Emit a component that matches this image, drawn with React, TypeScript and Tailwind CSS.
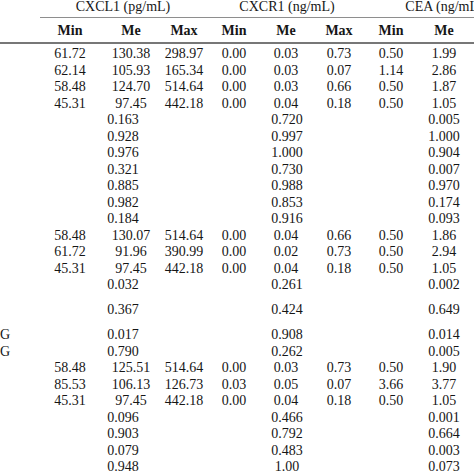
const cols = 'grid grid-cols-[40px_60px_62px_44px_56px_48px_58px_46px_60px_46px]';

type Row =
  | { kind: 'd'; v: string[] }
  | { kind: 'p'; v: string[]; label?: string; tall?: boolean };

const rows: Row[] = [
  { kind: 'd', v: ['61.72', '130.38', '298.97', '0.00', '0.03', '0.73', '0.50', '1.99'] },
  { kind: 'd', v: ['62.14', '105.93', '165.34', '0.00', '0.03', '0.07', '1.14', '2.86'] },
  { kind: 'd', v: ['58.48', '124.70', '514.64', '0.00', '0.03', '0.66', '0.50', '1.87'] },
  { kind: 'd', v: ['45.31', '97.45', '442.18', '0.00', '0.04', '0.18', '0.50', '1.05'] },
  { kind: 'p', v: ['0.163', '0.720', '0.005'] },
  { kind: 'p', v: ['0.928', '0.997', '1.000'] },
  { kind: 'p', v: ['0.976', '1.000', '0.904'] },
  { kind: 'p', v: ['0.321', '0.730', '0.007'] },
  { kind: 'p', v: ['0.885', '0.988', '0.970'] },
  { kind: 'p', v: ['0.982', '0.853', '0.174'] },
  { kind: 'p', v: ['0.184', '0.916', '0.093'] },
  { kind: 'd', v: ['58.48', '130.07', '514.64', '0.00', '0.04', '0.66', '0.50', '1.86'] },
  { kind: 'd', v: ['61.72', '91.96', '390.99', '0.00', '0.02', '0.73', '0.50', '2.94'] },
  { kind: 'd', v: ['45.31', '97.45', '442.18', '0.00', '0.04', '0.18', '0.50', '1.05'] },
  { kind: 'p', v: ['0.032', '0.261', '0.002'], tall: true },
  { kind: 'p', v: ['0.367', '0.424', '0.649'], tall: true },
  { kind: 'p', v: ['0.017', '0.908', '0.014'], label: 'G' },
  { kind: 'p', v: ['0.790', '0.262', '0.005'], label: 'G' },
  { kind: 'd', v: ['58.48', '125.51', '514.64', '0.00', '0.03', '0.73', '0.50', '1.90'] },
  { kind: 'd', v: ['85.53', '106.13', '126.73', '0.03', '0.05', '0.07', '3.66', '3.77'] },
  { kind: 'd', v: ['45.31', '97.45', '442.18', '0.00', '0.04', '0.18', '0.50', '1.05'] },
  { kind: 'p', v: ['0.096', '0.466', '0.001'] },
  { kind: 'p', v: ['0.903', '0.792', '0.664'] },
  { kind: 'p', v: ['0.079', '0.483', '0.003'] },
  { kind: 'p', v: ['0.948', '1.00', '0.073'] },
];

function Cell({ children, span }: { children?: React.ReactNode; span?: boolean }) {
  return (
    <div className={`flex justify-center whitespace-nowrap ${span ? 'col-span-3' : ''}`}>
      {children}
    </div>
  );
}

export default function App() {
  const groups = ['CXCL1 (pg/mL)', 'CXCR1 (ng/mL)', 'CEA (ng/mL)'];
  // the last column sits past the right edge of the crop
  const subs = ['Min', 'Me', 'Max', 'Min', 'Me', 'Max', 'Min', 'Me', ''];

  return (
    <div className="w-[474px] h-[474px] overflow-hidden bg-white text-[#161616] font-['Liberation_Serif',serif] text-[14px]">
      <div className="w-[520px]">
        {/* group titles */}
        <div className={`${cols} h-[18px]`}>
          <div />
          {groups.map((g) => (
            <div
              key={g}
              className="col-span-3 flex justify-center whitespace-nowrap border-b border-[#8e8e8e] leading-[14px]"
            >
              {g}
            </div>
          ))}
        </div>

        {/* sub headers */}
        <div className={`${cols} h-[26px] items-center border-b-2 border-[#777777] font-bold`}>
          <div />
          {subs.map((s, i) => (
            <Cell key={i}>{s}</Cell>
          ))}
        </div>

        {/* body */}
        <div className="pt-[2px] leading-[16.5px]">
          {rows.map((r, i) => (
            <div
              key={i}
              className={`${cols} items-start ${r.kind === 'p' && r.tall ? 'h-[25px]' : 'h-[16.5px]'}`}
            >
              <div className="whitespace-nowrap">{r.kind === 'p' ? r.label : null}</div>
              {r.kind === 'd' ? (
                <>
                  {r.v.map((v, j) => (
                    <Cell key={j}>{v}</Cell>
                  ))}
                  <Cell />
                </>
              ) : (
                r.v.map((v, j) => (
                  <Cell key={j} span>
                    {v}
                  </Cell>
                ))
              )}
            </div>
          ))}
        </div>
      </div>
    </div>
  );
}
